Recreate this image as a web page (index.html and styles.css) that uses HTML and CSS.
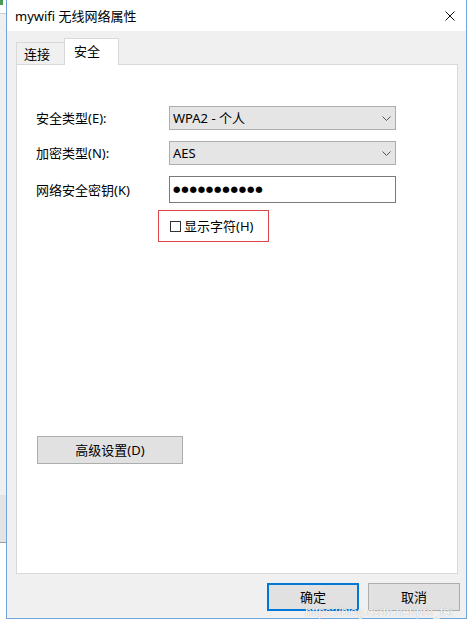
FILE: index.html
```html
<!DOCTYPE html>
<html lang="zh-CN">
<head>
    <meta charset="UTF-8">
    <title>mywifi 无线网络属性</title>
    <link rel="stylesheet" href="styles.css">
</head>
<body>
    <div class="strip">
        <div class="strip-top"></div>
        <div class="strip-white"></div>
        <div class="strip-line"></div>
        <div class="strip-gray"></div>
        <div class="strip-bar"></div>
        <div class="strip-line dark"></div>
        <div class="strip-rest"></div>
    </div>

    <div class="window">
        <div class="titlebar">
            <span class="title">mywifi 无线网络属性</span>
            <svg class="close" width="10" height="10" viewBox="0 0 10 10">
                <path d="M0.5 0.5 L9.5 9.5 M9.5 0.5 L0.5 9.5" stroke="#111" stroke-width="1" fill="none"/>
            </svg>
        </div>

        <div class="client">
            <div class="tabs">
                <div class="tab">连接</div>
                <div class="tab active">安全</div>
            </div>

            <div class="panel">
                <div class="form">
                    <label class="lbl">安全类型(E):</label>
                    <div class="select">
                        <span>WPA2 - 个人</span>
                        <svg width="9" height="5" viewBox="0 0 9 5"><path d="M0.5 0.5 L4.5 4.5 L8.5 0.5" stroke="#555" fill="none"/></svg>
                    </div>

                    <label class="lbl">加密类型(N):</label>
                    <div class="select">
                        <span>AES</span>
                        <svg width="9" height="5" viewBox="0 0 9 5"><path d="M0.5 0.5 L4.5 4.5 L8.5 0.5" stroke="#555" fill="none"/></svg>
                    </div>

                    <label class="lbl">网络安全密钥(K)</label>
                    <div class="password">●●●●●●●●●●●</div>
                </div>

                <div class="showbox">
                    <span class="checkbox"></span>
                    <span>显示字符(H)</span>
                </div>

                <div class="btn advanced">高级设置(D)</div>
            </div>

            <div class="actions">
                <div class="btn default">确定</div>
                <div class="btn">取消</div>
            </div>
        </div>
    </div>

    <div class="watermark">https://blog.csdn.net/pro_fei</div>
</body>
</html>
```

FILE: styles.css
```css
body {
    margin: 0;
    width: 474px;
    height: 627px;
    display: flex;
    background-color: #fff;
    font-family: "Noto Sans", "Noto Sans CJK SC", sans-serif;
    font-size: 13px;
    color: #000;
    overflow: hidden;
    position: relative;
}

/* background window peeking out on the left */
.strip {
    width: 6px;
    display: flex;
    flex-direction: column;
}

.strip-top {
    height: 5px;
    background: linear-gradient(to right, #4c9a52 3px, #fff 3px);
}

.strip-white {
    height: 8px;
}

.strip-line {
    height: 1px;
    background-color: #cfcfcf;
}

.strip-line.dark {
    background-color: #9c9c9c;
}

.strip-gray {
    height: 481px;
    background-color: #efefef;
}

.strip-bar {
    height: 47px;
    background-color: #e3e3e3;
}

.strip-rest {
    flex: 1;
}

/* dialog */
.window {
    width: 461px;
    height: 619px;
    box-sizing: border-box;
    border: 1px solid #70a6db;
    border-top: none;
    display: flex;
    flex-direction: column;
}

.titlebar {
    height: 31px;
    background-color: #fff;
    display: flex;
    align-items: center;
    justify-content: space-between;
    padding: 0 11px 0 8px;
}

.title {
    line-height: 16px;
}

.client {
    flex: 1;
    background-color: #f0f0f0;
    padding: 8px 8px 0 9px;
    display: flex;
    flex-direction: column;
}

.tabs {
    height: 25px;
    display: flex;
    align-items: flex-end;
    position: relative;
    z-index: 1;
}

.tab {
    box-sizing: border-box;
    width: 49px;
    height: 22px;
    border: 1px solid #d9d9d9;
    border-bottom: none;
    background-color: #f0f0f0;
    padding: 3px 0 0 7px;
    line-height: 16px;
}

.tab.active {
    width: 55px;
    height: 27px;
    margin-left: -1px;
    margin-bottom: -1px;
    background-color: #fff;
    padding: 4px 0 0 9px;
}

.panel {
    box-sizing: border-box;
    height: 510px;
    width: 442px;
    border: 1px solid #d9d9d9;
    background-color: #fff;
    padding: 41px 0 0 19px;
}

.form {
    display: grid;
    grid-template-columns: 133px 227px;
    grid-template-rows: 24px 24px 27px;
    row-gap: 11px;
    align-items: center;
}

.lbl {
    line-height: 16px;
}

.select {
    box-sizing: border-box;
    height: 24px;
    border: 1px solid #adadad;
    background-color: #e5e5e5;
    display: flex;
    align-items: center;
    justify-content: space-between;
    padding: 0 4px 0 3px;
    line-height: 16px;
}

.password {
    box-sizing: border-box;
    height: 27px;
    border: 1px solid #7a7a7a;
    background-color: #fff;
    padding: 0 0 0 3px;
    font-family: "DejaVu Sans", sans-serif;
    font-size: 8.5px;
    letter-spacing: 0.8px;
    line-height: 25px;
}

.showbox {
    box-sizing: border-box;
    width: 111px;
    height: 32px;
    margin: 7px 0 0 122px;
    border: 1px solid #e0474a;
    display: flex;
    align-items: center;
    padding-left: 11px;
    gap: 3px;
    line-height: 16px;
}

.checkbox {
    box-sizing: border-box;
    width: 11px;
    height: 11px;
    border: 1px solid #333;
    background-color: #fff;
}

.btn {
    box-sizing: border-box;
    height: 28px;
    border: 1px solid #adadad;
    background-color: #e1e1e1;
    display: flex;
    align-items: center;
    justify-content: center;
    line-height: 14px;
}

.advanced {
    width: 146px;
    margin: 194px 0 0 1px;
}

.actions {
    display: flex;
    justify-content: flex-end;
    gap: 9px;
    margin: 9px -2px 0 0;
}

.actions .btn {
    width: 92px;
}

.btn.default {
    border-color: #0078d7;
    box-shadow: inset 0 0 0 1px #0078d7;
}

.watermark {
    position: absolute;
    left: 305px;
    top: 606px;
    font-family: "Liberation Sans", sans-serif;
    font-size: 12px;
    line-height: 12px;
    color: rgba(255, 255, 255, 0.92);
    text-shadow: 0 0 1px rgba(0, 0, 0, 0.3);
    white-space: nowrap;
}
```
